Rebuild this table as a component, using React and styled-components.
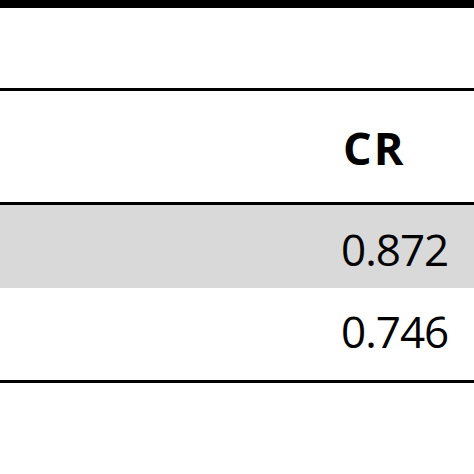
import React from "react";
import styled, { createGlobalStyle } from "styled-components";

const Global = createGlobalStyle`
  html, body { margin: 0; padding: 0; background: #ffffff; }
  body { font-family: "Open Sans", "Noto Sans", sans-serif; color: #000; }
`;

const Page = styled.div`
  width: 474px;
  height: 474px;
  overflow: hidden;
  display: flex;
  flex-direction: column;
`;

const TopBar = styled.div`
  height: 8px;
  background: #000;
`;

const Spacer = styled.div`
  height: 80px;
  border-bottom: 3px solid #000;
`;

const Row = styled.div`
  height: ${(p) => p.$h}px;
  background: ${(p) => (p.$shade ? "#d9d9d9" : "#ffffff")};
  border-bottom: ${(p) => (p.$border ? "3px solid #000" : "none")};
  display: flex;
  align-items: center;
  padding-left: ${(p) => p.$pad}px;
`;

const Cell = styled.span`
  font-size: ${(p) => (p.$bold ? 45 : 44)}px;
  font-weight: ${(p) => (p.$bold ? 700 : 400)};
  letter-spacing: ${(p) => (p.$bold ? 2 : -1)}px;
  line-height: 1;
  transform: translateY(${(p) => p.$dy || 0}px);
`;

export default function App() {
  return (
    <Page>
      <Global />
      <TopBar />
      <Spacer />
      <Row $h={111} $pad={343} $border>
        <Cell $bold $dy={1}>CR</Cell>
      </Row>
      <Row $h={83} $pad={341} $shade>
        <Cell $dy={2}>0.872</Cell>
      </Row>
      <Row $h={92} $pad={341} $border>
        <Cell $dy={-3}>0.746</Cell>
      </Row>
    </Page>
  );
}
